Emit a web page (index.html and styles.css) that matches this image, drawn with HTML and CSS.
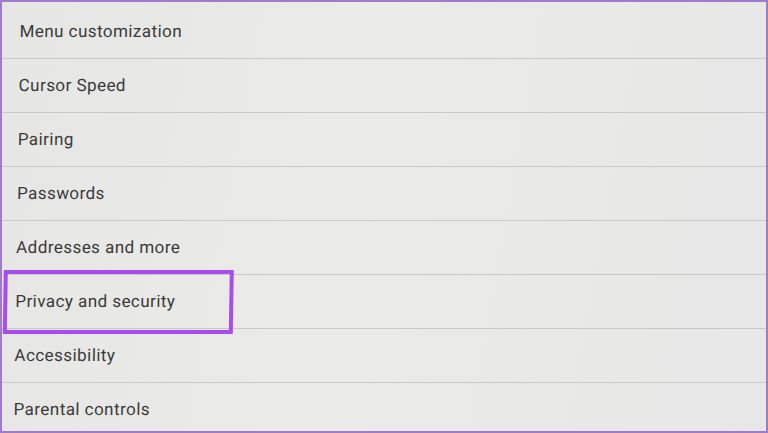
FILE: index.html
```html
<!DOCTYPE html>
<html lang="en">
<head>
    <meta charset="UTF-8">
    <meta name="viewport" content="width=device-width, initial-scale=1.0">
    <title>Settings</title>
    <link rel="stylesheet" href="styles.css">
</head>
<body>
    <div class="screen">
        <ul class="menu">
            <li class="item">Menu customization</li>
            <li class="item">Cursor Speed</li>
            <li class="item">Pairing</li>
            <li class="item">Passwords</li>
            <li class="item">Addresses and more</li>
            <li class="item focused">Privacy and security</li>
            <li class="item">Accessibility</li>
            <li class="item">Parental controls</li>
        </ul>
    </div>
</body>
</html>
```

FILE: styles.css
```css
:root {
    --screen-bg: #e8e8e6;
    --frame: #a07acb;
    --divider: #c9c9c6;
    --text-color: #3a3a3a;
    --focus: #a64cf0;
}

html, body {
    margin: 0;
    padding: 0;
}

body {
    font-family: Roboto, 'Liberation Sans', sans-serif;
    width: 768px;
    height: 433px;
    overflow: hidden;
}

.screen {
    box-sizing: border-box;
    width: 768px;
    height: 433px;
    border: 2px solid var(--frame);
    background: linear-gradient(100deg, #e6e6e4 0%, #ebebe8 45%, #e9eae8 70%, #e6e7e6 100%);
    overflow: hidden;
}

.menu {
    list-style: none;
    margin: 0 -12px 0 0;
    padding: 3px 0 0;
    transform: skewX(-0.9deg);
    transform-origin: top left;
}

.item {
    position: relative;
    height: 53px;
    line-height: 53px;
    padding-left: 18px;
    font-size: 17px;
    color: var(--text-color);
    border-bottom: 1px solid var(--divider);
    letter-spacing: 0.45px;
}

.item:last-child {
    border-bottom: none;
}

/* focus ring drawn over the row */
.focused::after {
    content: '';
    position: absolute;
    top: -5px;
    left: 6px;
    width: 222px;
    height: 56px;
    border: 4px solid var(--focus);
}
```
